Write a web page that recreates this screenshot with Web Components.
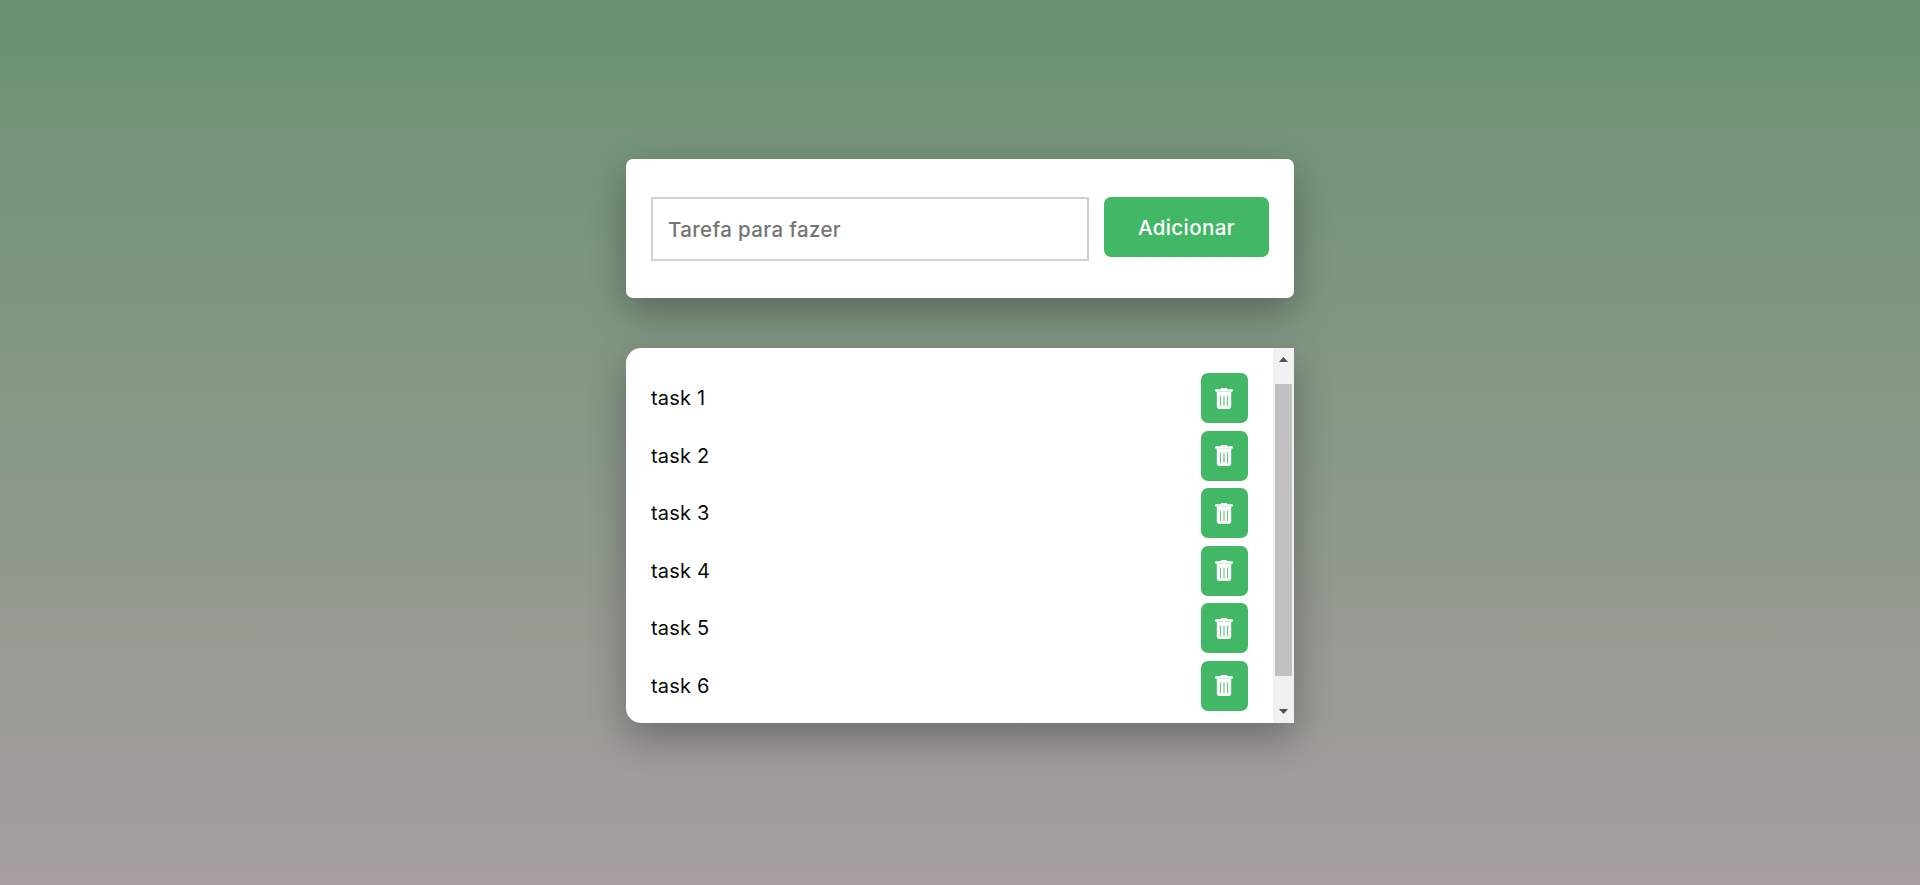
<!DOCTYPE html>
<html lang="pt">
<head>
<meta charset="utf-8">
<title>Tarefas</title>
<style>
html,body{margin:0;padding:0;height:100%}
body{height:885px;overflow:hidden;background:linear-gradient(to bottom,#6a9271,#a79e9f);font-family:"Inter","Lato","Liberation Sans",sans-serif;display:flex;flex-direction:column;align-items:center;padding-top:159px;box-sizing:border-box;gap:50px}
</style>
</head>
<body>
<todo-form></todo-form>
<todo-list>
  <todo-item>task 1</todo-item>
  <todo-item>task 2</todo-item>
  <todo-item>task 3</todo-item>
  <todo-item>task 4</todo-item>
  <todo-item>task 5</todo-item>
  <todo-item>task 6</todo-item>
</todo-list>
<script>
class TodoForm extends HTMLElement{
  constructor(){super();this.attachShadow({mode:"open"}).innerHTML=`
  <style>
  :host{display:flex;width:668px;height:139px;box-sizing:border-box;background:#fff;border-radius:7px;padding:38px 25px 37px 25px;gap:15px;align-items:flex-start;box-shadow:0 15px 38px rgba(0,0,0,.3)}
  .field{width:438px;height:64px;box-sizing:border-box;border:2px solid #d1d1d1;padding:0 15px;display:flex;align-items:center;font-size:20.5px;font-weight:450;letter-spacing:.34px;color:#757575;background:#fff}
  button{width:165px;height:60px;border:0;border-radius:7px;background:#42b866;color:#fff;font:550 20.5px "Inter","Lato",sans-serif;letter-spacing:.4px;padding:0}
  </style>
  <div class="field">Tarefa para fazer</div>
  <button>Adicionar</button>`}
}
class TodoList extends HTMLElement{
  constructor(){super();this.attachShadow({mode:"open"}).innerHTML=`
  <style>
  :host{display:flex;width:668px;height:375px;background:#fff;border-radius:15px 0 0 15px;box-shadow:0 15px 38px rgba(0,0,0,.3);overflow:hidden}
  .rows{flex:1;display:flex;flex-direction:column;gap:7.6px;padding:25px 25px 0 25px;min-width:0}
  .bar{width:21px;flex:none;background:#f1f1f1;display:flex;flex-direction:column;align-items:center}
  .up,.down{width:21px;height:36px;flex:none;display:flex;justify-content:center;box-sizing:border-box}
  .up{padding-top:9px}
  .down{height:39px;align-items:flex-start;padding-top:33px}
  .thumb{width:17px;height:292px;background:#c1c1c1;flex:none}
  svg{display:block;width:9px;height:5px;fill:#505050}
  </style>
  <div class="rows"><slot></slot></div>
  <div class="bar">
    <div class="up"><svg viewBox="0 0 9 5"><path d="M4.5 0 9 5H0z"/></svg></div>
    <div class="thumb"></div>
    <div class="down"><svg viewBox="0 0 9 5"><path d="M0 0h9L4.5 5z"/></svg></div>
  </div>`}
}
class TodoItem extends HTMLElement{
  constructor(){super();this.attachShadow({mode:"open"}).innerHTML=`
  <style>
  :host{display:flex;align-items:center;justify-content:space-between;height:50px;font-size:20px;letter-spacing:.2px;color:#0a0a0a}
  button{width:47px;height:50px;border:0;border-radius:7px;background:#42b866;padding:0 1px 0 0;display:flex;align-items:center;justify-content:center}
  svg{width:18px;height:21px;fill:#fff;display:block}
  </style>
  <span><slot></slot></span>
  <button aria-label="Excluir"><svg viewBox="0 0 18 21"><path fill-rule="evenodd" d="M5.500 1.200C5.800.4 6.500 0 7.200 0h3.600c.7 0 1.400.4 1.700 1.200H17c.6 0 1 .4 1 .9v.7c0 .5-.4.9-1 .9H1c-.6 0-1-.4-1-.9v-.7c0-.5.4-.9 1-.9zM1.800 4.000h14.400v14.500c0 1.400-1.100 2.500-2.500 2.500H4.300c-1.400 0-2.500-1.100-2.500-2.500zM4.900 7.400v10.600h.9V7.400zm3.650 0v10.600h.9V7.400zm3.650 0v10.600h.9V7.400z"/></svg></button>`}
}
customElements.define("todo-form",TodoForm);
customElements.define("todo-list",TodoList);
customElements.define("todo-item",TodoItem);
</script>
</body>
</html>
